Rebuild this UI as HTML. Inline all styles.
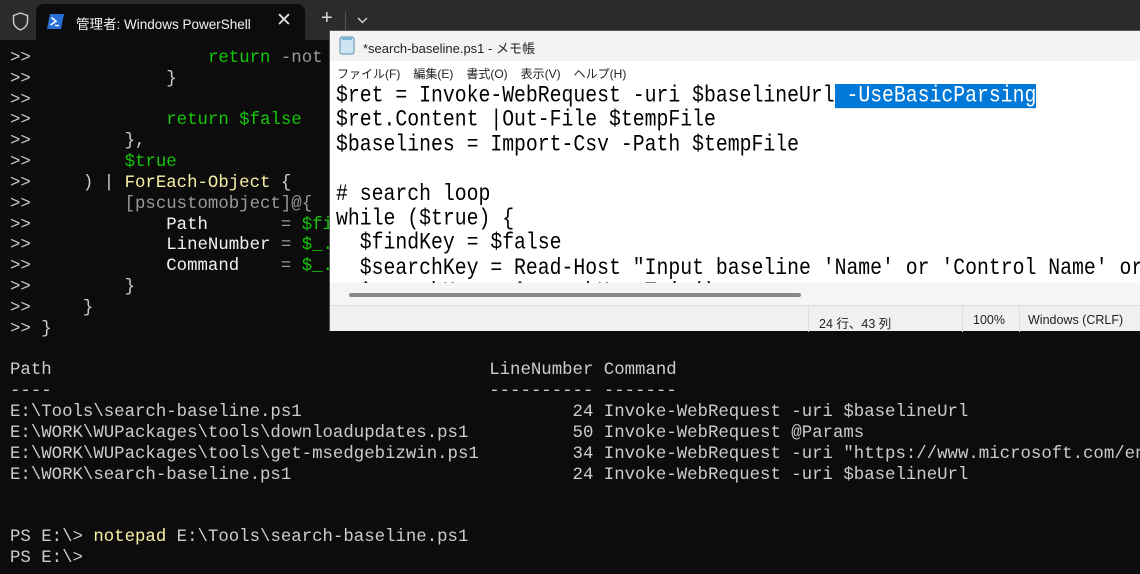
<!DOCTYPE html>
<html><head><meta charset="utf-8"><style>
*{margin:0;padding:0;box-sizing:border-box}
body{width:1140px;height:574px;overflow:hidden;background:#0c0c0c;position:relative;font-family:"Liberation Sans","Noto Sans CJK JP",sans-serif}
#tabbar{position:absolute;left:0;top:0;width:1140px;height:40px;background:#2b2b2b}
#tab{position:absolute;left:36px;top:4px;width:269px;height:36px;background:#0c0c0c;border-radius:8px 8px 0 0}
#term{position:absolute;left:10px;top:49px;font-family:"Liberation Mono",monospace;font-size:17.36px;line-height:20.83px;color:#cccccc;white-space:pre}
.g{color:#16c60c}.y{color:#f9f1a5}.w{color:#f2f2f2}.d{color:#9a9a9a}
#np{position:absolute;left:329px;top:30px;width:815px;height:301px;background:#fff;border:1px solid #555}
#npt{height:30px;background:#f3f3f3;font-size:13px;color:#222;padding:7px 0 0 33px;position:relative}
#menu{height:22px;font-size:12px;color:#222;padding:4px 0 0 7px}
#menu span{margin-right:13px}
#txt{position:absolute;left:6px;top:53px;font-family:"Liberation Mono",monospace;font-size:19.8px;line-height:21.4px;color:#000;white-space:pre;transform:scaleY(1.15);transform-origin:0 0;height:174px;overflow:hidden}
.sel{background:#0078d7;color:#fff}
#sb{position:absolute;left:0;top:252px;width:100%;height:22px;background:#f5f5f5}
#thumb{position:absolute;left:19px;top:10px;width:452px;height:4px;background:#888;border-radius:2px}
#st{position:absolute;left:0;top:274px;width:100%;height:26px;background:#f0f0f0;border-top:1px solid #ddd;font-size:12.5px;color:#222}
#st div{position:absolute;top:7px;white-space:nowrap}
#st .sep{position:absolute;top:0;width:1px;height:26px;background:#ddd}
</style></head><body>
<div id="tabbar">
<svg style="position:absolute;left:12px;top:12px" width="17" height="19" viewBox="0 0 17 19"><path d="M8.5 1 L15.5 3.5 V9 C15.5 13.5 12 16.5 8.5 18 C5 16.5 1.5 13.5 1.5 9 V3.5 Z" fill="none" stroke="#cfcfcf" stroke-width="1.4"/></svg>
<div id="tab">
<svg style="position:absolute;left:11px;top:10px" width="17" height="15" viewBox="0 0 17 15"><path d="M3 0 H17 L14 15 H0 Z" fill="#2a6fd6"/><path d="M4.5 3.5 L9 7.3 L3.5 11" fill="none" stroke="#fff" stroke-width="1.6"/><path d="M8 11.5 H12" stroke="#fff" stroke-width="1.4"/></svg>
<div style="position:absolute;left:40px;top:9px;font-size:13.5px;color:#f2f2f2">管理者: Windows PowerShell</div>
<div style="position:absolute;left:240px;top:5px;font-size:19px;color:#ddd">✕</div>
</div>
<div style="position:absolute;left:321px;top:7px;font-size:20px;color:#ddd">+</div>
<div style="position:absolute;left:345px;top:12px;width:1px;height:18px;background:#555"></div>
<svg style="position:absolute;left:357px;top:17px" width="11" height="7" viewBox="0 0 11 7"><path d="M1 1 L5.5 5.5 L10 1" fill="none" stroke="#ddd" stroke-width="1.3"/></svg>
</div>
<div id="term">&gt;&gt;                 <span class="g">return</span> <span class="d">-not</span>
&gt;&gt;             }
&gt;&gt;
&gt;&gt;             <span class="g">return $false</span>
&gt;&gt;         },
&gt;&gt;         <span class="g">$true</span>
&gt;&gt;     ) | <span class="y">ForEach-Object</span> {
&gt;&gt;         <span class="d">[pscustomobject]@{</span>
&gt;&gt;             <span class="w">Path</span>       <span class="d">=</span> <span class="g">$fi</span>
&gt;&gt;             <span class="w">LineNumber</span> <span class="d">=</span> <span class="g">$_.</span>
&gt;&gt;             <span class="w">Command</span>    <span class="d">=</span> <span class="g">$_.</span>
&gt;&gt;         }
&gt;&gt;     }
&gt;&gt; }

Path                                          LineNumber Command
----                                          ---------- -------
E:\Tools\search-baseline.ps1                          24 Invoke-WebRequest -uri $baselineUrl
E:\WORK\WUPackages\tools\downloadupdates.ps1          50 Invoke-WebRequest @Params
E:\WORK\WUPackages\tools\get-msedgebizwin.ps1         34 Invoke-WebRequest -uri "https://www.microsoft.com/en
E:\WORK\search-baseline.ps1                           24 Invoke-WebRequest -uri $baselineUrl


PS E:\&gt; <span class="y">notepad</span> E:\Tools\search-baseline.ps1
PS E:\&gt;</div>
<div id="np">
<div id="npt"><svg style="position:absolute;left:9px;top:5px" width="16" height="19" viewBox="0 0 16 19"><rect x="1" y="1" width="14" height="17" rx="2" fill="#cfe6f2" stroke="#5a8fae"/><rect x="3" y="1" width="10" height="3" fill="#7fb6d3"/></svg>*search-baseline.ps1 - メモ帳</div>
<div id="menu"><span>ファイル(F)</span><span>編集(E)</span><span>書式(O)</span><span>表示(V)</span><span>ヘルプ(H)</span></div>
<div id="txt">$ret = Invoke-WebRequest -uri $baselineUrl<span class="sel"> -UseBasicParsing</span>
$ret.Content |Out-File $tempFile
$baselines = Import-Csv -Path $tempFile

# search loop
while ($true) {
  $findKey = $false
  $searchKey = Read-Host "Input baseline 'Name' or 'Control Name' or
  $searchKey = $searchKey.Trim()</div>
<div id="sb"><div id="thumb"></div></div>
<div id="st"><div class="sep" style="left:478px"></div><div style="left:489px">24 行、43 列</div><div class="sep" style="left:632px"></div><div style="left:643px">100%</div><div class="sep" style="left:689px"></div><div style="left:698px">Windows (CRLF)</div></div>
</div>
</body></html>
